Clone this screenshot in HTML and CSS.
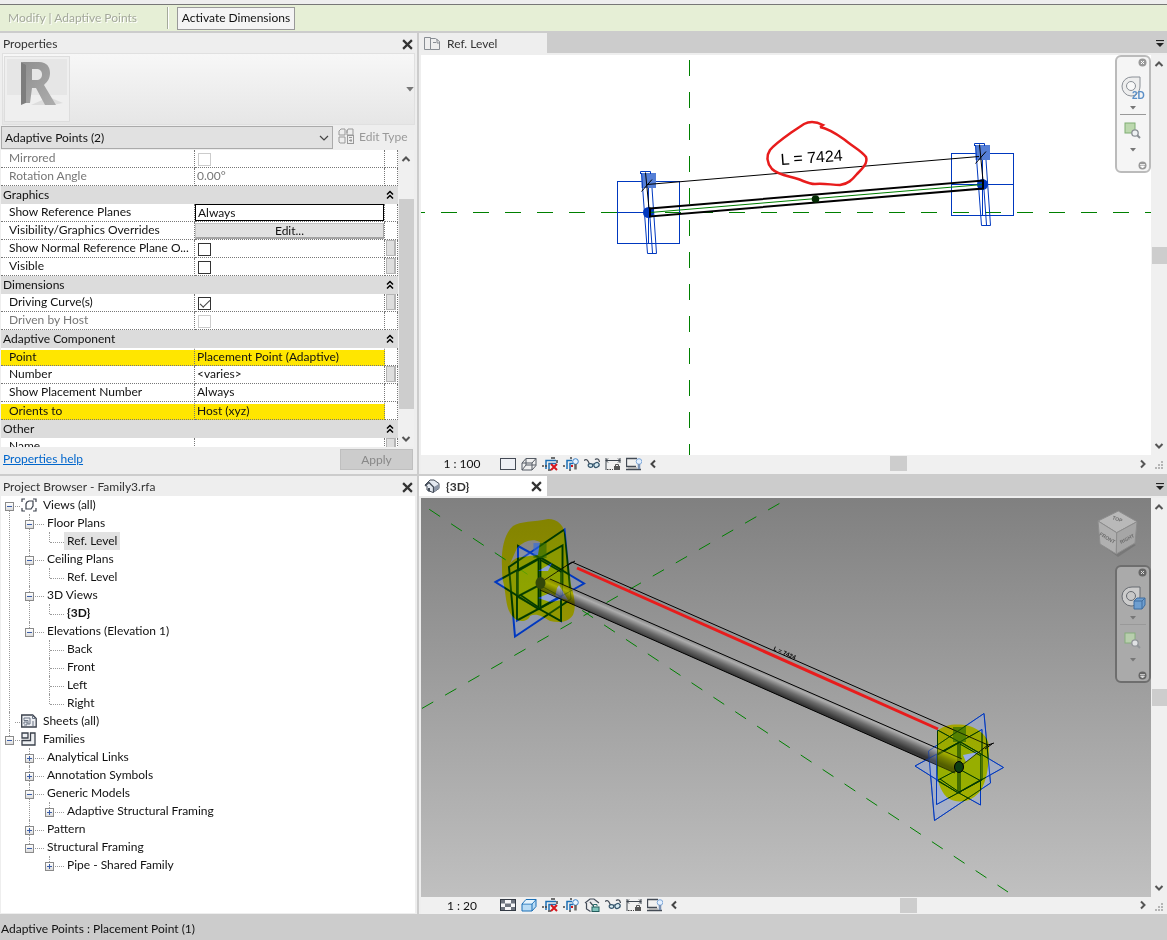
FILE: index.html
```html
<!DOCTYPE html>
<html lang="en">
<head>
<meta charset="utf-8">
<title>Family3.rfa</title>
<link rel="stylesheet" href="styles.css">
</head>
<body>
<svg class="defs" width="0" height="0" aria-hidden="true">
  <defs>
    <symbol id="i-close" viewBox="0 0 10 10"><path d="M1 1l8 8M9 1L1 9" stroke="#333" stroke-width="2" fill="none"/></symbol>
    <symbol id="i-up" viewBox="0 0 10 10"><path d="M1.5 7L5 3.5 8.500 7" stroke="#555" stroke-width="2" fill="none"/></symbol>
    <symbol id="i-down" viewBox="0 0 10 10"><path d="M1.5 3L5 6.500 8.500 3" stroke="#555" stroke-width="2" fill="none"/></symbol>
    <symbol id="i-left" viewBox="0 0 10 10"><path d="M7 1.500L3.500 5 7 8.500" stroke="#444" stroke-width="2" fill="none"/></symbol>
    <symbol id="i-right" viewBox="0 0 10 10"><path d="M3 1.500L6.500 5 3 8.500" stroke="#555" stroke-width="2" fill="none"/></symbol>
    <symbol id="i-collapse" viewBox="0 0 8 10"><path d="M1 4.500L4 1.500 7 4.500M1 8.500L4 5.500 7 8.500" stroke="#000" stroke-width="1.500" fill="none"/></symbol>
    <symbol id="i-menu" viewBox="0 0 8 7"><path d="M0 .5h8" stroke="#222" stroke-width="1.200"/><path d="M0 3h8L4 7z" fill="#222"/></symbol>
    <symbol id="i-rect" viewBox="0 0 16 14"><rect x=".5" y="1.500" width="15" height="11" fill="#eef0f5" stroke="#444a55"/></symbol>
    <symbol id="i-checker" viewBox="0 0 16 14"><rect x=".5" y="1.500" width="15" height="11" fill="#f6f6f8" stroke="#333a44"/><path d="M1 2h4v3.500H1zM11 2h4v3.500h-4zM5 5.500h6V9H5zM1 9h4v3H1zM11 9h4v3h-4z" fill="#6d737e"/></symbol>
    <symbol id="i-wire" viewBox="0 0 16 14"><path d="M1 6l4-4.500h10v7L11 13H1zM1 6h10v7M11 6l4-4.500M5 1.500V8L1 13M5 8h10" fill="none" stroke="#555b64"/></symbol>
    <symbol id="i-solid" viewBox="0 0 16 14"><path d="M1 6l4-4.500h10v7L11 13H1z" fill="#b9dcf5" stroke="#1b6fb5"/><path d="M1 6h10v7M11 6l4-4.500" fill="none" stroke="#1b6fb5"/><path d="M2 5.500l3.300-3.500h8.600L11 5.500z" fill="#e5f4fd"/></symbol>
    <symbol id="i-cropx" viewBox="0 0 16 14"><path d="M4 12V3.500h10M7 12V6.500h7" fill="none" stroke="#1b6fb5" stroke-width="1.500"/><path d="M0 9h2M3 9h2M9 1h4M15 3v3M6 13h3" stroke="#444" stroke-width="1.500"/><path d="M9 7l6 6M15 7l-6 6" stroke="#d5161d" stroke-width="2"/></symbol>
    <symbol id="i-cropb" viewBox="0 0 16 14"><path d="M4 12V3.500h5M7 12V6.500h3" fill="none" stroke="#1b6fb5" stroke-width="1.500"/><path d="M0 9h2M6 13h2M7 1h2" stroke="#444" stroke-width="1.500"/><path d="M8 9h2" stroke="#d5161d" stroke-width="2"/><circle cx="12.500" cy="4.500" r="2.800" fill="#e8f4ff" stroke="#3a7fc4"/><path d="M12.500 7v5.500" stroke="#666" stroke-width="2.500"/></symbol>
    <symbol id="i-glasses" viewBox="0 0 16 14"><path d="M0 3.500C2 1.500 3.500 2.500 5.500 7M11 2.500C13 1 15 2 15.500 5" fill="none" stroke="#444b55" stroke-width="1.200"/><ellipse cx="6.500" cy="8.500" rx="2.300" ry="1.800" fill="#d7ebf2" stroke="#34546b" stroke-width="1.200"/><path d="M8.500 7.500l2-1" stroke="#34546b"/><ellipse cx="12.500" cy="8" rx="2.700" ry="2.300" fill="#d7ebf2" stroke="#34546b" stroke-width="1.200" transform="rotate(-30 12.500 8)"/></symbol>
    <symbol id="i-dimlock" viewBox="0 0 16 14"><path d="M1 1v12M15 1v5M1 3.500h14M3 1.500l-2 2 2 2M13 1.500l2 2-2 2" fill="none" stroke="#3d444d"/><path d="M2 12.500h6" stroke="#444" stroke-dasharray="1.500 1"/><path d="M10.500 9V7.500h3V9" fill="none" stroke="#555"/><rect x="9" y="9" width="6" height="4" fill="#555"/></symbol>
    <symbol id="i-monitor" viewBox="0 0 16 14"><path d="M11 1.500H.5v8H10M0 12.500h15" fill="none" stroke="#444b55" stroke-width="1.300"/><circle cx="13" cy="4.500" r="2.800" fill="#e4f0ff" stroke="#7fa8d8"/><path d="M13 7v5" stroke="#7b93b5" stroke-width="2.500"/><path d="M2 11h9" stroke="#999"/></symbol>
    <symbol id="i-house" viewBox="0 0 16 15"><path d="M1 6l5-5h4l5 3.500v5l-6 4-6-2.500V7z" fill="#e4e9f0" stroke="#444c58"/><path d="M1 7l4-3.500 4.500 4.500v5.500" fill="none" stroke="#444c58" stroke-width="1.300"/><path d="M10 8l5-3v4.500L10 13z" fill="#8b95a5"/><path d="M5 9v3.500" stroke="#444c58" stroke-width="2"/></symbol>
    <symbol id="i-houselock" viewBox="0 0 16 14"><path d="M1 5l5-4h4l5 4M2.500 5v6l4 2.500M6 4l3 3.500" fill="#e9e9ec" stroke="#444c58" stroke-width="1.200"/><path d="M9.500 9V6.500h3.500V8" fill="none" stroke="#296a6a"/><rect x="8" y="9" width="7" height="4.500" fill="#7fc3bb" stroke="#235c5c"/></symbol>
    <symbol id="i-zoom" viewBox="0 0 18 18"><rect x="1" y="1" width="10" height="10" fill="#bcd8ae" stroke="#7fae72"/><path d="M13 13l3 3" stroke="#8a8f94" stroke-width="2"/><circle cx="11" cy="11" r="3.200" fill="#eef1f3" stroke="#8a8f94" stroke-width="1.300"/></symbol>
    <symbol id="i-tri" viewBox="0 0 6 4"><path d="M0 0h6L3 3.500z" fill="#777"/></symbol>
    <g id="planes" stroke="#0038bf" fill="#8fb0ff" fill-opacity=".18">
      <path d="M984 713.500L990.500 783 934.500 820.500 928.500 751z"/>
      <path d="M937.500 730L980.500 753.500V805L937.500 781z"/>
      <path d="M982 729.500V780L936.500 804.500V755z"/>
      <path d="M915 766L960 741.500 1003.500 767.500 958 793z"/>
      <path d="M960 741.500V793M958 743V791M938 780l21-11 22 12M937.500 755l22-12.500M960 744l21 12M940 779l19 13 23-13" fill="none"/>
      <rect x="953" y="727" width="13" height="15" fill="#2f6be0" fill-opacity=".55" stroke="none"/>
    </g>
    <g id="point" fill="none" stroke="#0038bf">
      <rect x="617.500" y="181.500" width="62" height="62"/>
      <rect x="641.500" y="173" width="14.500" height="15" fill="#557fd6" stroke="none"/>
      <path d="M617 212.500h30M640.500 174v-2.500h10V174M641.500 173L647.500 253.500h9L652 188M648.500 188v55M650 218l2.500 35"/>
      <circle cx="648.500" cy="212.500" r="5.500" fill="#0038bf" stroke="none"/>
      <path d="M645.500 172.500l3.500 36M641.500 191.500l10.500-12" stroke="#000"/>
    </g>
    <linearGradient id="sky" x1="0" y1="0" x2="0" y2="1"><stop offset="0" stop-color="#808080"/><stop offset="1" stop-color="#c0c0c0"/></linearGradient>
    <linearGradient id="pipe" gradientUnits="userSpaceOnUse" x1="712" y1="649" x2="706" y2="663"><stop offset="0" stop-color="#858585"/><stop offset=".25" stop-color="#adadad"/><stop offset=".6" stop-color="#6b6b6b"/><stop offset="1" stop-color="#363636"/></linearGradient>
    <linearGradient id="rface" x1="0" y1="0" x2="1" y2="1"><stop offset="0" stop-color="#8f8f8f"/><stop offset="1" stop-color="#adadad"/></linearGradient>
  </defs>
</svg>

<div class="ribbon-edge"></div>
<header class="options">
  <span class="context">Modify | Adaptive Points</span>
  <span class="rule"></span>
  <button class="activate">Activate Dimensions</button>
</header>

<main class="workspace">
  <div class="dock">
    <section class="panel">
      <div class="panel-title"><h2>Properties</h2><button class="plain" aria-label="Close properties"><svg width="11" height="11"><use href="#i-close"/></svg></button></div>
      <div class="preview">
        <div class="thumb-box">
          <svg width="60" height="60" viewBox="0 0 60 60"><rect width="60" height="36" fill="#e6e6e6"/><path d="M0 36L60 37V60H0z" fill="#efefef"/><path d="M24 46l18-8 14 6-10 2z" fill="#ddd"/>
            <path d="M14 3l7 3V43l-7 3z" fill="#7d7d7d"/><path fill-rule="evenodd" d="M14 3h18c8 0 11 5 11 11 0 6-3 9-6 12L49 46H38L29 29h-4l-2 15h-4V6zM25 10v11h4c4 0 6-2 6-5.500S33 10 29 10z" fill="url(#rface)"/></svg>
        </div>
        <svg class="preview-arrow" width="8" height="5"><use href="#i-tri"/></svg>
      </div>
      <div class="type-row">
        <div class="select-wrap"><select aria-label="Selection filter"><option>Adaptive Points (2)</option></select><svg width="12" height="12" viewBox="0 0 12 12"><path d="M2 4l4 4 4-4" fill="none" stroke="#444" stroke-width="1.200"/></svg></div>
        <button class="edit-type" disabled><svg width="17" height="17" viewBox="0 0 17 17" fill="none" stroke="#999"><path d="M1 7V3l2-2h4v6zM9 7V3l1-2h5v6zM1 14V9h6v6H2zM9 2v3"/><rect x="9.500" y="7.500" width="6" height="8" fill="#eee"/><path d="M11 9.500h3M11 12.500h3M13 11v3"/></svg>Edit Type</button>
      </div>
      <div class="props">
        <div class="props-view">
        <table>
          <colgroup><col class="c-name"><col><col class="c-btn"></colgroup>
          <tbody>
          <tr class="off"><th><label for="p1">Mirrored</label></th><td><input id="p1" type="checkbox" disabled></td><td></td></tr>
          <tr class="off"><th>Rotation Angle</th><td>0.00°</td><td></td></tr>
          <tr class="group"><th colspan="2">Graphics</th><td><svg width="8" height="10"><use href="#i-collapse"/></svg></td></tr>
          <tr><th>Show Reference Planes</th><td class="edit"><input type="text" value="Always" aria-label="Show Reference Planes"></td><td></td></tr>
          <tr><th>Visibility/Graphics Overrides</th><td class="edit"><button class="cell-btn">Edit...</button></td><td></td></tr>
          <tr><th><label for="p2">Show Normal Reference Plane O...</label></th><td><input id="p2" type="checkbox"></td><td><button class="assoc" aria-label="Associate parameter"></button></td></tr>
          <tr><th><label for="p3">Visible</label></th><td><input id="p3" type="checkbox"></td><td><button class="assoc" aria-label="Associate parameter"></button></td></tr>
          <tr class="group"><th colspan="2">Dimensions</th><td><svg width="8" height="10"><use href="#i-collapse"/></svg></td></tr>
          <tr><th><label for="p4">Driving Curve(s)</label></th><td><input id="p4" type="checkbox" checked></td><td><button class="assoc" aria-label="Associate parameter"></button></td></tr>
          <tr class="off"><th><label for="p5">Driven by Host</label></th><td><input id="p5" type="checkbox" disabled></td><td></td></tr>
          <tr class="group"><th colspan="2">Adaptive Component</th><td><svg width="8" height="10"><use href="#i-collapse"/></svg></td></tr>
          <tr class="marked"><th>Point</th><td>Placement Point (Adaptive)</td><td></td></tr>
          <tr><th>Number</th><td>&lt;varies&gt;</td><td><button class="assoc" aria-label="Associate parameter"></button></td></tr>
          <tr><th>Show Placement Number</th><td>Always</td><td></td></tr>
          <tr class="marked"><th>Orients to</th><td>Host (xyz)</td><td></td></tr>
          <tr class="group"><th colspan="2">Other</th><td><svg width="8" height="10"><use href="#i-collapse"/></svg></td></tr>
          <tr><th>Name</th><td></td><td><button class="assoc" aria-label="Associate parameter"></button></td></tr>
          </tbody>
        </table>
        </div>
        <div class="vbar props-bar"><svg width="10" height="10"><use href="#i-up"/></svg><span class="long-thumb"></span><svg width="10" height="10"><use href="#i-down"/></svg></div>
      </div>
      <div class="panel-foot"><a href="#help">Properties help</a><button class="apply" disabled>Apply</button></div>
    </section>

    <section class="panel">
      <div class="panel-title"><h2>Project Browser - Family3.rfa</h2><button class="plain" aria-label="Close project browser"><svg width="11" height="11"><use href="#i-close"/></svg></button></div>
      <div class="browser">
        <ul class="tree root">
          <li><div class="row"><button class="exp" aria-label="Collapse"></button><svg class="ico" width="16" height="14" viewBox="0 0 16 14"><path d="M1 4V1h3M12 1h3v3M15 10v3h-3M4 13H1v-3M6 4l2-1h4v5l-2 3H5V6z" fill="none" stroke="#3b414c" stroke-width="1.200"/></svg><span>Views (all)</span></div>
            <ul class="tree">
              <li><div class="row"><button class="exp" aria-label="Collapse"></button><span>Floor Plans</span></div>
                <ul class="tree leafs"><li><div class="row"><span class="sel">Ref. Level</span></div></li></ul></li>
              <li><div class="row"><button class="exp" aria-label="Collapse"></button><span>Ceiling Plans</span></div>
                <ul class="tree leafs"><li><div class="row"><span>Ref. Level</span></div></li></ul></li>
              <li><div class="row"><button class="exp" aria-label="Collapse"></button><span>3D Views</span></div>
                <ul class="tree leafs"><li><div class="row"><span class="current">{3D}</span></div></li></ul></li>
              <li><div class="row"><button class="exp" aria-label="Collapse"></button><span>Elevations (Elevation 1)</span></div>
                <ul class="tree leafs"><li><div class="row"><span>Back</span></div></li><li><div class="row"><span>Front</span></div></li><li><div class="row"><span>Left</span></div></li><li><div class="row"><span>Right</span></div></li></ul></li>
            </ul></li>
          <li><div class="row"><i class="noexp"></i><svg class="ico" width="16" height="14" viewBox="0 0 16 14"><path d="M.7 1h11l3.500 3.500V13H.7z" fill="#eceef2" stroke="#3b414c" stroke-width="1.300"/><path d="M11.500 1v3.500H15M3 10V8h3v3H3M3 5.500V4h6v6h-2V6.500H3zM12 7v5" fill="none" stroke="#6b7585"/></svg><span>Sheets (all)</span></div></li>
          <li><div class="row"><button class="exp" aria-label="Collapse"></button><svg class="ico" width="16" height="14" viewBox="0 0 16 14"><path d="M1 1h6v5H1zM9.500 1H14v12H1V8.500h8.500z" fill="#eef0f3" stroke="#3b414c" stroke-width="1.300"/></svg><span>Families</span></div>
            <ul class="tree">
              <li><div class="row"><button class="exp plus" aria-label="Expand"></button><span>Analytical Links</span></div></li>
              <li><div class="row"><button class="exp plus" aria-label="Expand"></button><span>Annotation Symbols</span></div></li>
              <li><div class="row"><button class="exp" aria-label="Collapse"></button><span>Generic Models</span></div>
                <ul class="tree"><li><div class="row"><button class="exp plus" aria-label="Expand"></button><span>Adaptive Structural Framing</span></div></li></ul></li>
              <li><div class="row"><button class="exp plus" aria-label="Expand"></button><span>Pattern</span></div></li>
              <li><div class="row"><button class="exp" aria-label="Collapse"></button><span>Structural Framing</span></div>
                <ul class="tree"><li><div class="row"><button class="exp plus" aria-label="Expand"></button><span>Pipe - Shared Family</span></div></li></ul></li>
            </ul></li>
        </ul>
      </div>
    </section>
  </div>

  <div class="views">
    <section class="view">
      <div class="tabs"><div class="tab"><svg width="17" height="15" viewBox="0 0 17 15" fill="none" stroke="#888d93"><path d="M.5 1.500h6v12h-6zM6.500 2.500h5l4 3v8h-9M6.500 6v4M9 6.500h3M13 3v4h2"/></svg><span>Ref. Level</span></div><button class="plain tabmenu" aria-label="Tab list"><svg width="8" height="7"><use href="#i-menu"/></svg></button></div>
      <div class="stage">
        <div class="canvas plan">
          <svg class="drawing" viewBox="421 55 730 400" preserveAspectRatio="xMinYMin slice">
            <path d="M409 212.500H1151" stroke="#008000" stroke-dasharray="16 16"/>
            <path d="M689.500 60V455" stroke="#008000" stroke-dasharray="16 16"/>
            <use href="#point"/><use href="#point" x="334" y="-28"/>
            <path d="M983 184.500h30" stroke="#0038bf"/>
            <path d="M647 184.500L979 156.500" stroke="#000"/>
            <path d="M650 208.500L983 180.500V188.500L650 216.500z" fill="none" stroke="#000" stroke-width="2"/>
            <path d="M650 212.500L983 184.500" stroke="#008000"/>
            <circle cx="815.500" cy="199" r="3.800" fill="#032c03"/>
            <path d="M983 180v9M650 208v9" stroke="#000" stroke-width="2"/>
            <text class="dim" x="781" y="165" transform="rotate(-4 781 165)">L = 7424</text>
            <path d="M820 127L823 125C815 121 808 122 804 124L792 132C785 137 775 144 770 150C766 156 767 163 772 169C778 175 789 176 798 179C806 182 809 184 815 184C824 183 832 185 840 185C848 184 852 180 857 174C863 168 868 163 866 157C862 151 852 146 845 140C838 135 830 129 820 127" fill="none" stroke="#e81c1c" stroke-width="2.500"/>
          </svg>
          <div class="navbar light">
            <svg class="nav-x" width="9" height="9" viewBox="0 0 9 9"><circle cx="4.500" cy="4.500" r="4" fill="#999"/><path d="M3 3l3 3M6 3L3 6" stroke="#fff"/></svg>
            <svg width="26" height="26" viewBox="0 0 26 26"><path d="M12 2h8v9c0 6-4 10-9 10A9.500 9.500 0 1 1 12 2z" fill="#eee" stroke="#8a8f96"/><circle cx="11" cy="11" r="4.500" fill="#f8f8f8" stroke="#8a8f96"/><text class="two-d" x="12" y="24">2D</text></svg>
            <svg width="6" height="4"><use href="#i-tri"/></svg>
            <span class="nav-rule"></span>
            <svg width="18" height="18"><use href="#i-zoom"/></svg>
            <svg width="6" height="4"><use href="#i-tri"/></svg>
            <svg class="nav-min" width="9" height="9" viewBox="0 0 9 9"><circle cx="4.500" cy="4.500" r="4" fill="#999"/><path d="M2 3.500h5M2.500 5h4L4.500 7z" stroke="#fff" stroke-width=".8" fill="#fff"/></svg>
          </div>
        </div>
        <div class="vbar"><svg width="10" height="10"><use href="#i-up"/></svg><span class="thumb"></span><svg width="10" height="10"><use href="#i-down"/></svg></div>
      </div>
      <div class="viewbar">
        <button class="scale">1 : 100</button>
        <div class="tools">
          <button aria-label="Detail level"><svg width="16" height="14"><use href="#i-rect"/></svg></button>
          <button aria-label="Visual style"><svg width="16" height="14"><use href="#i-wire"/></svg></button>
          <button aria-label="Do not crop view"><svg width="16" height="14"><use href="#i-cropx"/></svg></button>
          <button aria-label="Show crop region"><svg width="16" height="14"><use href="#i-cropb"/></svg></button>
          <button aria-label="Temporary hide"><svg width="16" height="14"><use href="#i-glasses"/></svg></button>
          <button aria-label="Reveal constraints"><svg width="16" height="14"><use href="#i-dimlock"/></svg></button>
          <button aria-label="Preview visibility"><svg width="16" height="14"><use href="#i-monitor"/></svg></button>
        </div>
        <div class="hbar"><svg width="10" height="10"><use href="#i-left"/></svg><span class="thumb"></span><svg width="10" height="10"><use href="#i-right"/></svg></div>
        <span class="corner"><svg width="9" height="9" viewBox="0 0 9 9" fill="#b5b5b5"><path d="M6 0h2v2H6zM3 3h2v2H3zM6 3h2v2H6zM0 6h2v2H0zM3 6h2v2H3zM6 6h2v2H6z"/></svg></span>
      </div>
    </section>

    <section class="view lower">
      <div class="tabs"><div class="tab active"><svg width="16" height="15"><use href="#i-house"/></svg><span>{3D}</span><button class="plain" aria-label="Close view"><svg width="11" height="11"><use href="#i-close"/></svg></button></div><button class="plain tabmenu" aria-label="Tab list"><svg width="8" height="7"><use href="#i-menu"/></svg></button></div>
      <div class="stage">
        <div class="canvas model">
          <svg class="drawing" viewBox="421 498 730 399" preserveAspectRatio="xMinYMin slice">
            <rect x="421" y="498" width="730" height="399" fill="url(#sky)"/>
            <path d="M428 508.500L1008 892" stroke="#008000" stroke-dasharray="13 13.200" stroke-dashoffset="-1.500" fill="none"/>
            <path d="M782 502L421 709" stroke="#008000" stroke-dasharray="13 13.600" stroke-dashoffset="-3" fill="none"/>
            <use class="glow" href="#planes" x="-419.500" y="-184"/><use href="#planes"/>
            <path d="M543 577L550 579 962 759 955 773 540 590z" fill="url(#pipe)"/>
            <path d="M550 579L962 759M540 590L955 773M572 562L988 745 994 743M988 745L962 765M572 562L543 581M568 565l7-4M985 749l7-5" stroke="#000" fill="none"/>
            <path d="M577 568L938 729" stroke="#e81c1c" stroke-width="3"/>
            <use class="faint" href="#planes" x="-419.500" y="-184"/><use class="ghost" href="#planes"/>
            <text class="dim small" x="773" y="650" transform="rotate(24 773 650)">L = 7424</text>
            <g class="marker">
              <path fill-rule="evenodd" d="M502 567C501 550 504 534 513 526C520 521 534 522 548 519C558 519 565 525 566 540L571 585C575 598 576 608 573 615C568 623 558 623 550 621C542 616 536 613 530 616C528 622 518 623 513 617C506 610 506 596 504 585C502 579 502 573 502 567zM509 566L517 548C524 541 532 538 540 542L538 555L522 557C516 557 511 561 509 566zM538 571L552 563 548 571zM557 588L559 585 568 600 555 597zM538 598L550 593 562 600 550 602z"/>
              <path fill-rule="evenodd" d="M937 731C944 725 952 724 960 724.500C975 725 989 735 989 747C989 765 987 780 981 790C975 798 968 802 959 801.500C948 801 943 795 939 784C937 777 937 768 937 760zM963 755L978 752 966 762z"/>
            </g>
            <ellipse cx="540.500" cy="583" rx="5" ry="6" fill="#33470a"/><ellipse cx="959" cy="767" rx="4.500" ry="5.500" fill="#0e3d12" stroke="#000"/>
          </svg>
          <svg class="cube" width="46" height="52" viewBox="1095 508 46 52"><path d="M1102 545l16 12 18-12-18-8z" fill="#000" opacity=".12"/><g stroke="#8d8d8d"><path d="M1118.300 511L1137 521.700 1116.700 532.700 1098 521z" fill="#b9b9b9"/><path d="M1098 521L1116.700 532.700 1116.300 554 1100 544z" fill="#b0b0b0"/><path d="M1137 521.700L1116.700 532.700 1116.300 554 1135 543z" fill="#a6a6a6"/></g><g class="cube-text"><text x="1112" y="519" transform="rotate(20 1112 519)">TOP</text><text x="1099" y="535" transform="rotate(31 1099 535)">FRONT</text><text x="1121" y="544" transform="rotate(-28 1121 544)">RIGHT</text></g></svg>
          <div class="navbar dark">
            <svg class="nav-x" width="9" height="9" viewBox="0 0 9 9"><circle cx="4.500" cy="4.500" r="4" fill="#666"/><path d="M3 3l3 3M6 3L3 6" stroke="#ddd"/></svg>
            <svg width="26" height="26" viewBox="0 0 26 26"><path d="M12 2h8v9c0 6-4 10-9 10A9.500 9.500 0 1 1 12 2z" fill="#ccc" stroke="#666a70"/><circle cx="11" cy="11" r="4.500" fill="#c8c8c8" stroke="#666a70"/><path d="M14 16l3-3h8v7l-3 4h-8z" fill="#6f9fd0" stroke="#3f6d9f"/><path d="M14 16h8v8M22 16l3-3" stroke="#3f6d9f" fill="none"/></svg>
            <svg width="6" height="4"><use href="#i-tri"/></svg>
            <span class="nav-rule"></span>
            <svg class="dim-zoom" width="18" height="18"><use href="#i-zoom"/></svg>
            <svg width="6" height="4"><use href="#i-tri"/></svg>
            <svg class="nav-min" width="9" height="9" viewBox="0 0 9 9"><circle cx="4.500" cy="4.500" r="4" fill="#666"/><path d="M2 3.500h5M2.500 5h4L4.500 7z" stroke="#ddd" stroke-width=".8" fill="#ddd"/></svg>
          </div>
        </div>
        <div class="vbar"><svg width="10" height="10"><use href="#i-up"/></svg><span class="thumb"></span><svg width="10" height="10"><use href="#i-down"/></svg></div>
      </div>
      <div class="viewbar">
        <button class="scale">1 : 20</button>
        <div class="tools">
          <button aria-label="Detail level"><svg width="16" height="14"><use href="#i-checker"/></svg></button>
          <button aria-label="Visual style"><svg width="16" height="14"><use href="#i-solid"/></svg></button>
          <button aria-label="Do not crop view"><svg width="16" height="14"><use href="#i-cropx"/></svg></button>
          <button aria-label="Show crop region"><svg width="16" height="14"><use href="#i-cropb"/></svg></button>
          <button aria-label="Unlocked 3D view"><svg width="16" height="14"><use href="#i-houselock"/></svg></button>
          <button aria-label="Temporary hide"><svg width="16" height="14"><use href="#i-glasses"/></svg></button>
          <button aria-label="Reveal constraints"><svg width="16" height="14"><use href="#i-dimlock"/></svg></button>
          <button aria-label="Preview visibility"><svg width="16" height="14"><use href="#i-monitor"/></svg></button>
        </div>
        <div class="hbar"><svg width="10" height="10"><use href="#i-left"/></svg><span class="thumb"></span><svg width="10" height="10"><use href="#i-right"/></svg></div>
        <span class="corner"><svg width="9" height="9" viewBox="0 0 9 9" fill="#b5b5b5"><path d="M6 0h2v2H6zM3 3h2v2H3zM6 3h2v2H6zM0 6h2v2H0zM3 6h2v2H3zM6 6h2v2H6z"/></svg></span>
      </div>
    </section>
  </div>
</main>
<footer class="status">Adaptive Points : Placement Point (1)</footer>
</body>
</html>
```
FILE: styles.css
```css
* { box-sizing: border-box; }
body {
  margin: 0;
  min-height: 100vh;
  display: flex;
  flex-direction: column;
  background: #ccc;
  color: #111;
  font: 12px/18px Lato, "Open Sans", sans-serif;
}
button, input, select { font: inherit; color: inherit; margin: 0; }
button { padding: 0; }
svg { display: block; flex: none; }
h2 { margin: 0; font-size: 12px; font-weight: 400; color: #333; }
.defs { position: absolute; }

.ribbon-edge { height: 5px; background: #eee; border-bottom: 1px solid #777; }
.options { height: 28px; display: flex; align-items: center; background: #e6efd6; border-bottom: 2px solid #ccc; padding: 0 8px 0 8px; }
.context { width: 159px; color: #a3a89a; text-shadow: 1px 1px 0 #fff; white-space: nowrap; }
.rule { width: 2px; height: 22px; background: #a5aa9b; border-right: 1px solid #fff; margin-right: 8px; }
.activate { height: 23px; width: 118px; background: #f4f4f4; border: 1px solid #999; white-space: nowrap; }

.workspace { flex: 1; display: grid; grid-template-columns: 417px minmax(0, 1fr); column-gap: 2px; padding-bottom: 2px; }
.dock, .views { display: grid; grid-template-rows: 441fr 438fr; row-gap: 2px; min-width: 0; }

.panel { background: #eee; display: flex; flex-direction: column; min-height: 0; padding: 0 2px 0 1px; }
.panel-title { height: 20px; display: flex; align-items: center; justify-content: space-between; padding: 2px 2px 0 2px; }
.plain { border: 0; background: none; display: grid; place-items: center; }
.preview { height: 72px; margin: 0 0 0 1px; border: 1px solid #e0e0e0; background: linear-gradient(#f7f7f7, #e6e6e6); display: flex; align-items: center; justify-content: space-between; padding: 2px 0 2px 1px; }
.thumb-box { width: 66px; height: 66px; border: 1px solid #ddd; padding: 2px; background: #efefef; }
.type-row { height: 25px; display: flex; padding-top: 1px; align-items: flex-start; }
.select-wrap { width: 332px; position: relative; }
.select-wrap select { width: 100%; height: 23px; border: 1px solid #aaa; border-radius: 0; background: #e1e1e1; appearance: none; padding: 0 3px; }
.select-wrap svg { position: absolute; right: 3px; top: 6px; pointer-events: none; }
.edit-type { border: 0; background: none; height: 21px; margin-left: 5px; display: flex; align-items: center; gap: 4px; color: #999; white-space: nowrap; }

.props { flex: 1 1 0; min-height: 0; display: flex; overflow: hidden; margin-right: 1px; }
.props-view { flex: 1; min-width: 0; overflow: hidden; background: #fff; }
.props table { width: 100%; table-layout: fixed; border-collapse: separate; border-spacing: 0; }
.c-name { width: 194px; }
.c-btn { width: 13px; }
.props tr { height: 18px; }
.props th, .props td { height: 18px; line-height: 16px; padding: 0 0 1px 2px; font-weight: 400; text-align: left; vertical-align: middle; border-bottom: 1px dotted #777; border-right: 1px dotted #777; white-space: nowrap; overflow: hidden; }
.props th { padding-left: 8px; }
.off { color: #777; }
.props .group th, .props .group td { background: #dcdcdc; border: 0; }
.props .group th { padding-left: 2px; }
.props .marked th, .props .marked td:nth-child(2) { background: #ffe600; border-top: 2px solid #fff; line-height: 14px; }
.props td:last-child { padding-left: 1px; }
.props td.edit { padding: 0; }
.edit input { width: 100%; height: 17px; display: block; border: 1px solid #000; border-radius: 0; padding: 0 2px; background: #fff; line-height: 15px; }
.cell-btn { width: 100%; height: 16px; display: block; line-height: 14px; background: #e1e1e1; border: 1px solid #c4c4c4; border-bottom: 2px solid #a5a5a5; border-right-color: #a5a5a5; }
.assoc { width: 10px; height: 16px; display: block; background: #dedede; border: 1px solid #b5b5b5; border-right-width: 2px; }
.props input[type=checkbox] { appearance: none; width: 13px; height: 13px; display: block; margin: 2px 0 0 1px; border: 1px solid #333; background: #fff; }
.props input[type=checkbox]:disabled { border-color: #ccc; }
.props input:checked::after { content: ""; display: block; width: 9px; height: 4px; margin: 2px 0 0 1px; border: solid #444; border-width: 0 0 1px 1px; transform: rotate(-45deg); }
.props-bar { width: 16px; padding: 4px 0 3px; }
.long-thumb { width: 15px; flex: 0 0 210px; background: #cdcdcd; margin-top: 10px; }

.vbar { background: #f0f0f0; display: flex; flex-direction: column; align-items: center; justify-content: space-between; }
.panel-foot { height: 27px; display: flex; justify-content: space-between; align-items: flex-start; padding: 2px 2px 0 2px; }
.panel-foot a { color: #0066cc; line-height: 20px; }
.apply { width: 73px; height: 21px; background: #ccc; border: 1px solid #bfbfbf; color: #888; }

.browser { flex: 1; background: #fff; overflow: hidden; margin-bottom: 1px; }
.tree { list-style: none; margin: 0; padding: 0 0 0 20px; }
.root { padding-left: 4px; }
.tree li { position: relative; }
.tree li::before { content: ""; position: absolute; left: 4px; top: 0; bottom: 0; border-left: 1px dotted #999; }
.tree li:last-child::before { bottom: auto; height: 10px; }
.root > li:first-child::before { top: 12px; }
.row { height: 18px; display: flex; align-items: center; white-space: nowrap; }
.row::after { content: ""; order: 1; width: 9px; border-top: 1px dotted #999; margin: 3px 1px 0 1px; }
.row > span { order: 3; padding: 0 2px; }
.row .ico { order: 2; }
.root > li > .row::after { width: 5px; }
.root > li > .row > span { margin-left: 4px; }
.exp { position: relative; order: 0; width: 9px; height: 9px; margin-top: 3px; border: 1px solid #8a8a8a; background: linear-gradient(#3b5ea8, #3b5ea8) center / 5px 1px no-repeat, linear-gradient(#fff, #ddd); }
.exp.plus { background: linear-gradient(#3b5ea8, #3b5ea8) center / 5px 1px no-repeat, linear-gradient(#3b5ea8, #3b5ea8) center / 1px 5px no-repeat, linear-gradient(#fff, #ddd); }
.noexp { width: 9px; }
.leafs .row::after { width: 14px; margin-left: 5px; margin-right: 0; }
.leafs .row > span { padding: 0 3px; }
.sel { background: #e2e2e2; }
.current { font-weight: 700; }

.view { background: #eee; display: flex; flex-direction: column; min-width: 0; padding-left: 2px; }
.tabs { height: 20px; background: #ccc; display: flex; justify-content: space-between; margin-left: -2px; }
.tab { width: 128px; background: #eee; display: flex; align-items: center; gap: 6px; padding: 1px 5px 0; color: #333; }
.tab.active { background: #fff; font-weight: 700; }
.tab.active button { margin-left: auto; }
.tabmenu { width: 14px; }
.stage { flex: 1; display: flex; margin-top: 2px; min-height: 0; }
.canvas { position: relative; flex: 1; min-width: 0; overflow: hidden; background: #fff; }
.drawing { position: absolute; inset: 0; width: 100%; height: 100%; }
.stage .vbar { width: 16px; padding: 4px 0; }
.stage .thumb { width: 15px; height: 17px; background: #cdcdcd; margin-left: 1px; }
.viewbar { height: 19px; display: flex; align-items: center; background: #f0f0f0; padding-bottom: 2px; }
.lower .viewbar { height: 17px; padding-bottom: 1px; }
.scale { border: 0; background: none; width: 79px; padding-left: 3px; line-height: 17px; white-space: nowrap; }
.tools { display: flex; gap: 5px; }
.tools button { width: 16px; height: 14px; border: 0; background: none; }
.hbar { flex: 1; display: flex; align-items: center; justify-content: space-between; padding: 0 3px 0 6px; }
.hbar .thumb { width: 17px; height: 15px; background: #cdcdcd; }
.corner { width: 16px; display: grid; place-items: center; padding-top: 4px; }

.navbar { position: absolute; right: 0; top: 0; width: 36px; height: 118px; border: 2px solid; border-radius: 6px; display: flex; flex-direction: column; align-items: center; padding: 1px 2px; }
.navbar.light { border-color: #bbb; background: #f5f5f5; }
.navbar.dark { top: 67px; border-color: #6e6e6e; background: #aaa; }
.nav-x, .nav-min { align-self: flex-end; }
.nav-x { margin-bottom: 8px; }
.navbar > svg:nth-child(2) { margin-bottom: 5px; }
.nav-rule { width: 26px; height: 1px; background: #999; margin: 4px 0 7px; }
.navbar > svg:nth-child(6) { margin-top: 8px; }
.nav-min { margin-top: auto; }
.cube { position: absolute; right: 10px; top: 10px; }

.dim { font: 16px "Liberation Sans", sans-serif; fill: #000; }
.dim.small { font-size: 6px; font-weight: 700; }
.two-d { font: 700 10px "Liberation Sans", sans-serif; fill: #5b8fc7; }
.cube-text { font: 700 5px "Liberation Sans", sans-serif; fill: #6b6b6b; }
.marker { fill: #ff0; mix-blend-mode: multiply; }
.glow { stroke-width: 2px; }
.ghost { opacity: .6; }
.faint { opacity: .35; }
.dim-zoom { opacity: .8; }

.status { height: 24px; background: #ccc; padding: 4px 1px; line-height: 18px; white-space: nowrap; }
```
